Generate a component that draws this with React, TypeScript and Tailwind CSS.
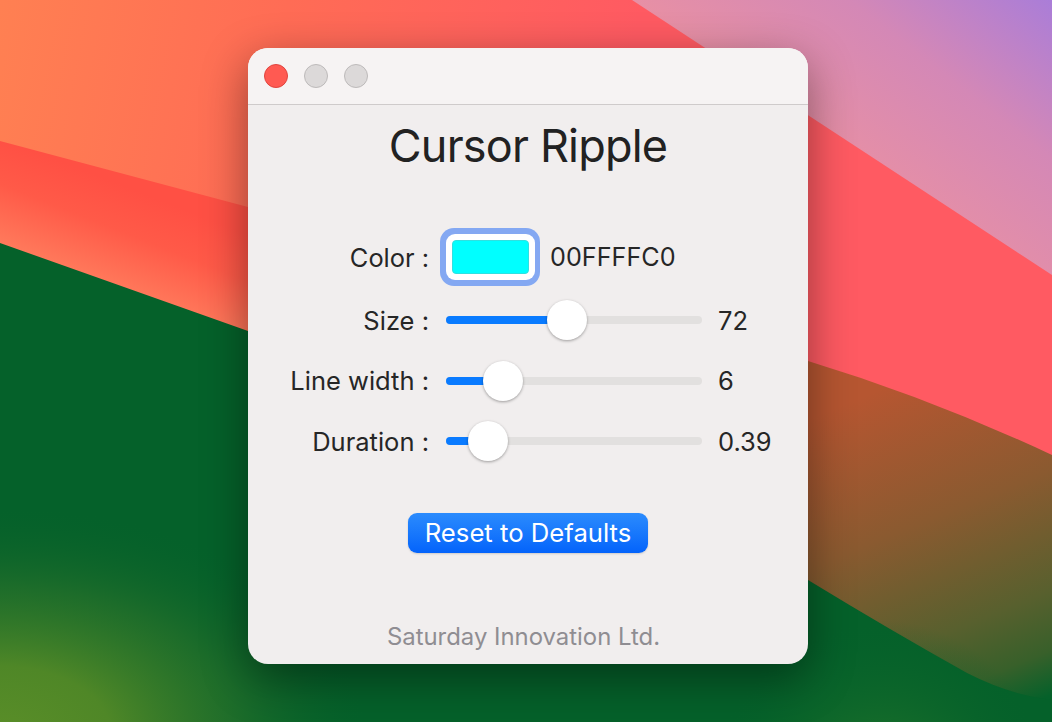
import React from "react";

const FONT = "font-['Inter','Noto_Sans',sans-serif]";

const Wallpaper = () => (
  <svg className="absolute inset-0 h-full w-full" viewBox="0 0 1052 722" preserveAspectRatio="none">
    <defs>
      <linearGradient id="base" gradientUnits="userSpaceOnUse" x1="0" y1="0" x2="620" y2="120">
        <stop offset="0" stopColor="#ff8052" />
        <stop offset="0.45" stopColor="#ff6c55" />
        <stop offset="1" stopColor="#ff5a62" />
      </linearGradient>
      <linearGradient id="lilac" gradientUnits="userSpaceOnUse" x1="880" y1="220" x2="1052" y2="0">
        <stop offset="0" stopColor="#ea91a2" />
        <stop offset="0.55" stopColor="#d488b6" />
        <stop offset="1" stopColor="#aa7dd8" />
      </linearGradient>
      <linearGradient id="band" gradientUnits="userSpaceOnUse" x1="130" y1="175" x2="85" y2="290">
        <stop offset="0.1" stopColor="#ff5044" />
        <stop offset="0.45" stopColor="#ff5a48" />
        <stop offset="1" stopColor="#ff8160" />
      </linearGradient>
      <linearGradient id="brown" gradientUnits="userSpaceOnUse" x1="880" y1="390" x2="1010" y2="712">
        <stop offset="0" stopColor="#b65631" />
        <stop offset="0.4" stopColor="#8a5a30" />
        <stop offset="0.72" stopColor="#58602e" />
        <stop offset="0.88" stopColor="#38602a" />
        <stop offset="1" stopColor="#05612a" />
      </linearGradient>
      <radialGradient id="moss" gradientUnits="userSpaceOnUse" cx="0" cy="735" r="370" gradientTransform="translate(0 735) scale(1 0.62) translate(0 -735)">
        <stop offset="0" stopColor="#5a8e28" />
        <stop offset="0.3" stopColor="#4f8727" />
        <stop offset="0.65" stopColor="#24702a" stopOpacity="0.75" />
        <stop offset="1" stopColor="#05612a" stopOpacity="0" />
      </radialGradient>
      <radialGradient id="moss2" gradientUnits="userSpaceOnUse" cx="880" cy="790" r="170">
        <stop offset="0" stopColor="#2a7a2a" />
        <stop offset="1" stopColor="#05612a" stopOpacity="0" />
      </radialGradient>
    </defs>
    <rect width="1052" height="722" fill="url(#base)" />
    <polygon points="632,0 1052,0 1052,275" fill="url(#lilac)" />
    <polygon points="0,141 248,207 500,300 500,500 0,400" fill="url(#band)" />
    <path d="M808,361 Q930,398 1052,455 L1052,722 L808,722 Z" fill="url(#brown)" />
    <path d="M0,243 L248,331 L808,580 Q890,630 967,673 Q1010,695 1052,700 L1052,722 L0,722 Z" fill="#05612a" />
    <rect width="1052" height="722" fill="url(#moss)" />
    <rect x="700" y="600" width="352" height="122" fill="url(#moss2)" />
  </svg>
);

const Slider = ({ label, value, percent }: { label: string; value: string; percent: number }) => (
  <div className="flex h-10 items-center">
    <span className="mt-[2px] w-[181px] shrink-0 text-right text-[25.5px] text-[#262626]">{label}</span>
    <div className="relative ml-[17px] h-2 w-[256px] shrink-0 rounded-full bg-[#e2e0df]">
      <div className="h-2 rounded-l-full bg-[#0a7bff]" style={{ width: `${percent}%` }} />
      <div
        className="absolute top-1/2 h-10 w-10 -translate-x-1/2 -translate-y-1/2 rounded-full bg-white shadow-[0_1px_3px_rgba(0,0,0,0.35)]"
        style={{ left: `${percent}%` }}
      />
    </div>
    <span className="mt-[2px] ml-[16px] text-[25.5px] text-[#262626]">{value}</span>
  </div>
);

export default function App() {
  return (
    <div className={`relative h-[722px] w-[1052px] overflow-hidden ${FONT}`}>
      <Wallpaper />
      {/* window */}
      <div className="absolute left-[248px] top-[48px] flex h-[616px] w-[560px] flex-col overflow-hidden rounded-[20px] bg-[#f1eeee] shadow-[0_14px_46px_rgba(0,0,0,0.42)]">
        <div className="flex h-[57px] shrink-0 items-center gap-4 border-b border-[#cfcbcb] bg-[#f6f3f3] pl-4">
          <span className="h-6 w-6 rounded-full border border-[#e0443e] bg-[#ff5a52]" />
          <span className="h-6 w-6 rounded-full border border-[#bdbaba] bg-[#dcd9d9]" />
          <span className="h-6 w-6 rounded-full border border-[#bdbaba] bg-[#dcd9d9]" />
        </div>

        <h1 className="mt-[14px] text-center text-[45px] leading-[54px] font-normal tracking-[-0.8px] text-[#222222]">
          Cursor Ripple
        </h1>

        <div className="mt-[55px] flex h-[58px] items-center">
          <span className="mt-[2px] w-[181px] shrink-0 text-right text-[25.4px] text-[#262626]">Color :</span>
          <div className="ml-[11px] flex h-[58px] w-[100px] shrink-0 items-center justify-center rounded-[14px] bg-[#84a8f2]">
            <div className="flex h-[46px] w-[89px] items-center justify-center rounded-[9px] bg-white">
              <div className="h-[34px] w-[77px] rounded-[4px] border border-[#30e0e0] bg-[#00ffff]" />
            </div>
          </div>
          <span className="mt-[2px] ml-[10px] text-[25.2px] text-[#262626]">00FFFFC0</span>
        </div>

        <div className="mt-[14px] flex flex-col gap-[20.5px]">
          <Slider label="Size :" value="72" percent={47.3} />
          <Slider label="Line width :" value="6" percent={22.3} />
          <Slider label="Duration :" value="0.39" percent={16.4} />
        </div>

        <button className="mx-auto mt-[52px] h-10 w-[240px] rounded-[9px] bg-gradient-to-b from-[#2b8bfd] to-[#0463fb] text-[25.7px] text-white shadow-[0_1px_2px_rgba(0,0,0,0.15)]">
          Reset to Defaults
        </button>

        <p className="mt-auto mb-[9px] pr-[9px] text-center text-[23.9px] text-[#8f8d92]">Saturday Innovation Ltd.</p>
      </div>
    </div>
  );
}
